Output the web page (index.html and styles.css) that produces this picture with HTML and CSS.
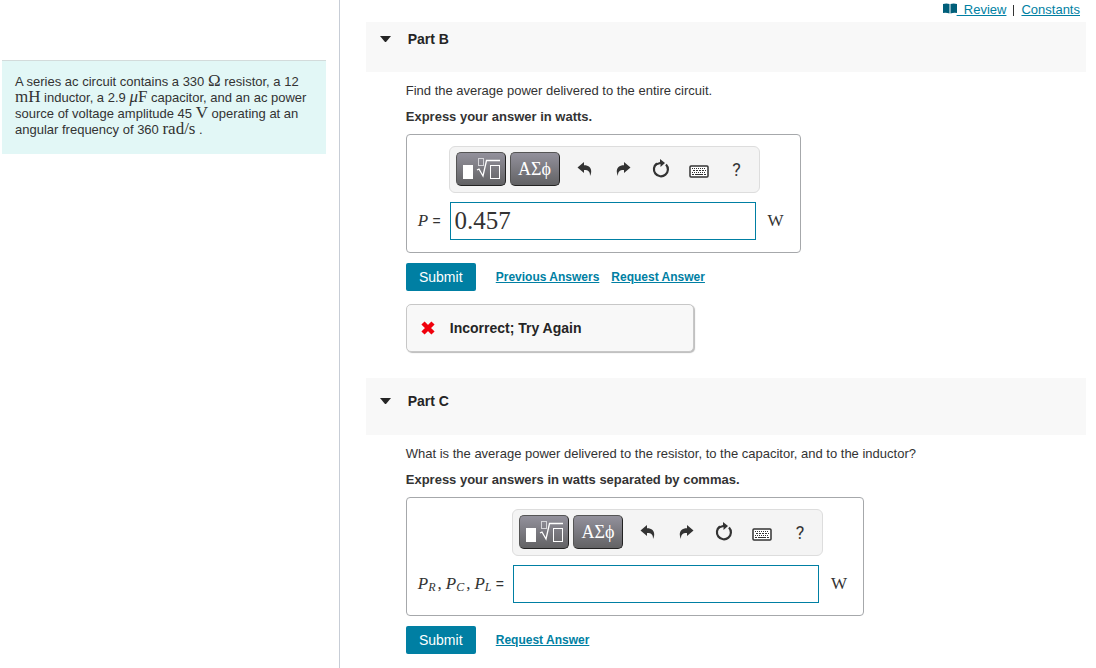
FILE: index.html
```html
<!DOCTYPE html>
<html lang="en">
<head>
    <meta charset="UTF-8">
    <meta name="viewport" content="width=device-width, initial-scale=1.0">
    <title>AC Circuit Power</title>
    <link rel="stylesheet" href="styles.css">
</head>
<body>
<svg class="sprite" aria-hidden="true">
    <symbol id="icon-template" viewBox="0 0 40 24">
        <rect x="2" y="8" width="10" height="14" fill="#fff"/>
        <rect x="17.500" y="1.500" width="5" height="7" fill="none" stroke="#d4d4d8"/>
        <path d="M16 13l2-1 4 7L25.500 3.500H39" fill="none" stroke="#fff" stroke-width="1.300"/>
        <rect x="29.500" y="8.500" width="9" height="13" fill="none" stroke="#fff"/>
    </symbol>
    <symbol id="icon-undo" viewBox="0 0 16 16">
        <path d="M7 1v3.300c4.800 0 7.500 2.600 7.200 6.800-.1 1.500-.5 2.700-1.200 3.900.2-4.300-1.600-6-6-5.900V12L.5 6.500z" fill="#333"/>
    </symbol>
    <symbol id="icon-redo" viewBox="0 0 16 16">
        <path d="M9 1v3.300C4.200 4.300 1.500 6.900 1.800 11.100c.1 1.500.5 2.700 1.200 3.900-.2-4.300 1.600-6 6-5.900V12l6.500-5.500z" fill="#333"/>
    </symbol>
    <symbol id="icon-reset" viewBox="0 0 20 20">
        <path d="M6 4.500A7 7 0 1 0 15 5.500" fill="none" stroke="#333" stroke-width="2.200"/>
        <path d="M9 0l5 4-4.500 4V5L5 6.500 4.500 4.500 9 3z" fill="#333"/>
    </symbol>
    <symbol id="icon-keyboard" viewBox="0 0 20 13">
        <rect x="1" y="1" width="18" height="11" rx="1" fill="#fff" stroke="#333" stroke-width="1.500"/>
        <path d="M3 3.500h14M3 7.500h14" stroke="#333" stroke-dasharray="1 1"/>
        <path d="M4 5.500h13" stroke="#333" stroke-dasharray="2 1"/>
        <path d="M3 9.500h2M6 9.500h8M15 9.500h2" stroke="#333"/>
    </symbol>
</svg>

<div class="page">
    <aside class="sidebar">
        <div class="problem">
            A series ac circuit contains a 330 <span class="math">Ω</span> resistor, a 12
            <span class="math">mH</span> inductor, a 2.9 <span class="math"><i>μ</i>F</span> capacitor, and an ac power
            source of voltage amplitude 45 <span class="math">V</span> operating at an
            angular frequency of 360 <span class="math">rad/s</span> .
        </div>
    </aside>

    <main class="content">
        <nav class="top-links">
            <a href="#review"><svg class="book" viewBox="0 0 14 11" aria-hidden="true"><path d="M0 1q3.500-1 6.500 0v9.500Q3.500 9.500 0 10zM7.500 1q3-1 6.500 0v9q-3.500-.5-6.500.5z" fill="#005f7a"/></svg>&nbsp; Review</a>
            <span class="divider"></span>
            <a href="#constants">Constants</a>
        </nav>

        <section class="part">
            <h2 class="part-header part-header-first">
                <button type="button" class="toggle" aria-label="Collapse Part B"></button>
                Part B
            </h2>
            <form class="part-body">
                <p>Find the average power delivered to the entire circuit.</p>
                <p class="instruction">Express your answer in watts.</p>
                <div class="answer-box">
                    <div class="toolbar">
                        <div class="palettes">
                            <button type="button" class="palette" aria-label="Templates"><svg width="40" height="24"><use href="#icon-template"/></svg></button>
                            <button type="button" class="palette">ΑΣϕ</button>
                        </div>
                        <div class="tools">
                            <button type="button" class="tool" aria-label="Undo"><svg width="16" height="16"><use href="#icon-undo"/></svg></button>
                            <button type="button" class="tool" aria-label="Redo"><svg width="16" height="16"><use href="#icon-redo"/></svg></button>
                            <button type="button" class="tool" aria-label="Reset"><svg width="20" height="20"><use href="#icon-reset"/></svg></button>
                            <button type="button" class="tool tool-keyboard" aria-label="Keyboard shortcuts"><svg width="20" height="13"><use href="#icon-keyboard"/></svg></button>
                            <button type="button" class="tool">?</button>
                        </div>
                    </div>
                    <label class="quantity" for="answer-b"><i>P</i> <span class="equals">=</span></label>
                    <input class="answer" id="answer-b" type="text" value="0.457">
                    <span class="unit">W</span>
                </div>
                <div class="actions">
                    <button type="submit" class="submit">Submit</button>
                    <a href="#previous">Previous Answers</a>
                    <a href="#request-b">Request Answer</a>
                </div>
                <div class="feedback">
                    <svg width="14" height="14" viewBox="0 0 14 14" aria-hidden="true"><path d="M2 2l10 10M12 2L2 12" stroke="#f0000c" stroke-width="4.500"/></svg>
                    Incorrect; Try Again
                </div>
            </form>
        </section>

        <section class="part">
            <h2 class="part-header">
                <button type="button" class="toggle" aria-label="Collapse Part C"></button>
                Part C
            </h2>
            <form class="part-body">
                <p>What is the average power delivered to the resistor, to the capacitor, and to the inductor?</p>
                <p class="instruction">Express your answers in watts separated by commas.</p>
                <div class="answer-box">
                    <div class="toolbar">
                        <div class="palettes">
                            <button type="button" class="palette" aria-label="Templates"><svg width="40" height="24"><use href="#icon-template"/></svg></button>
                            <button type="button" class="palette">ΑΣϕ</button>
                        </div>
                        <div class="tools">
                            <button type="button" class="tool" aria-label="Undo"><svg width="16" height="16"><use href="#icon-undo"/></svg></button>
                            <button type="button" class="tool" aria-label="Redo"><svg width="16" height="16"><use href="#icon-redo"/></svg></button>
                            <button type="button" class="tool" aria-label="Reset"><svg width="20" height="20"><use href="#icon-reset"/></svg></button>
                            <button type="button" class="tool tool-keyboard" aria-label="Keyboard shortcuts"><svg width="20" height="13"><use href="#icon-keyboard"/></svg></button>
                            <button type="button" class="tool">?</button>
                        </div>
                    </div>
                    <label class="quantity" for="answer-c"><i>P<sub>R</sub></i><span class="comma">,</span><i>P<sub>C</sub></i><span class="comma">,</span><i>P<sub>L</sub></i> <span class="equals">=</span></label>
                    <input class="answer" id="answer-c" type="text">
                    <span class="unit">W</span>
                </div>
                <div class="actions">
                    <button type="submit" class="submit">Submit</button>
                    <a href="#request-c">Request Answer</a>
                </div>
            </form>
        </section>
    </main>
</div>
</body>
</html>
```

FILE: styles.css
```css
* {
    box-sizing: border-box;
}

body {
    margin: 0;
    font-family: "Liberation Sans", Arial, sans-serif;
    font-size: 13px;
    line-height: 16px;
    color: #333;
    background-color: #fff;
}

a {
    color: #007fa3;
}

button {
    font-family: inherit;
    cursor: pointer;
}

.sprite {
    display: none;
}

.page {
    display: flex;
    min-height: 100vh;
}

.sidebar {
    width: 31%;
    padding: 60px 13px 0 2px;
    border-right: 1px solid #c7cdd6;
}

.problem {
    padding: 13px 13px 16px;
    border-top: 1px solid #d3dbdb;
    background-color: #e2f7f6;
}

.math {
    font-family: "Liberation Serif", "Times New Roman", serif;
    font-size: 17px;
    line-height: 12px;
}

.content {
    flex: 1;
    padding: 0 10px 0 26px;
}

.top-links {
    display: flex;
    justify-content: flex-end;
    align-items: center;
    gap: 7px;
    height: 22px;
    padding: 0 6px 2px 0;
}

.book {
    width: 14px;
    height: 11px;
}

.divider {
    width: 1px;
    height: 11px;
    background-color: #333;
}

.part-header {
    display: flex;
    gap: 17px;
    margin: 0;
    padding: 15px 14px 26px;
    font-size: 14px;
    color: #252525;
    background-color: #f8f8f8;
}

.part-header-first {
    padding: 9px 14px 25px;
}

.toggle {
    width: 11px;
    height: 16px;
    padding: 0;
    border: none;
    background: none;
}

.toggle::before {
    content: "";
    display: block;
    border: solid transparent;
    border-width: 6px 5px 0;
    border-top-color: #252525;
}

.part-body {
    padding: 11px 40px 26px;
}

.part-body p {
    margin: 0 0 10px;
}

.part-body .instruction {
    margin-bottom: 9px;
    font-weight: bold;
}

.answer-box {
    display: inline-grid;
    grid-template-columns: auto 311px auto;
    align-items: center;
    gap: 9px 8px;
    padding: 11px 16px 12px 11px;
    border: 1px solid #a6a8ab;
    border-radius: 4px;
    vertical-align: top;
}

.toolbar {
    grid-column: 2;
    display: flex;
    gap: 6px;
    padding: 5px 0 6px 6px;
    border: 1px solid #ddd;
    border-radius: 6px;
    background-color: #f4f4f4;
}

.palettes {
    display: flex;
    gap: 4px;
}

.palette {
    display: flex;
    justify-content: center;
    align-items: center;
    width: 50px;
    height: 34px;
    padding: 0;
    border: 1px solid #555;
    border-right-color: #222;
    border-bottom-color: #222;
    border-radius: 5px;
    font-family: "Liberation Serif", "Times New Roman", serif;
    font-size: 18px;
    color: #fff;
    background: linear-gradient(#93919c, #626264);
}

.tools {
    display: flex;
}

.tool {
    display: flex;
    justify-content: center;
    align-items: center;
    width: 38px;
    height: 34px;
    padding: 0;
    border: none;
    font-family: Roboto, sans-serif;
    font-size: 18px;
    color: #333;
    background: none;
}

.tool-keyboard {
    padding-top: 5px;
}

.quantity,
.unit {
    font-family: "Liberation Serif", "Times New Roman", serif;
    font-size: 17px;
}

.quantity {
    grid-column: 1;
}

.quantity sub {
    font-size: 12px;
    line-height: 0;
    vertical-align: -2px;
}

.comma {
    margin: 0 4px 0 2px;
}

.equals {
    font-family: "Liberation Sans", Arial, sans-serif;
    font-size: 14px;
}

.answer {
    width: 306px;
    height: 38px;
    margin-left: 1px;
    padding: 0 4px;
    border: 1px solid #007fa3;
    font-family: "Liberation Serif", "Times New Roman", serif;
    font-size: 25px;
    color: #333;
}

.actions {
    display: flex;
    align-items: center;
    gap: 12px;
    margin-top: 10px;
    font-size: 12px;
    font-weight: bold;
}

.submit {
    width: 70px;
    height: 28px;
    margin-right: 8px;
    padding: 0;
    border: none;
    border-radius: 2px;
    font-size: 14px;
    color: #fff;
    background-color: #007fa3;
}

.feedback {
    display: flex;
    align-items: center;
    gap: 15px;
    max-width: 288px;
    height: 48px;
    margin-top: 13px;
    padding: 0 14px;
    border: 1px solid #c7c7c7;
    border-radius: 5px;
    box-shadow: 1px 1px 1px #bbb;
    font-size: 14px;
    font-weight: bold;
    color: #252525;
    background-color: #f8f8f8;
}
```
